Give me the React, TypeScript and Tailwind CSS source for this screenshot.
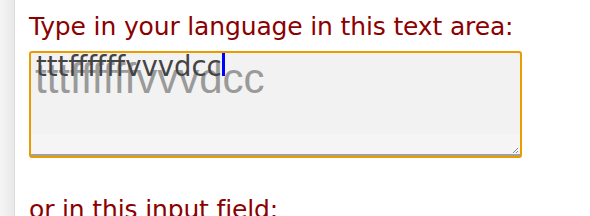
import React from "react";

export default function App() {
  return (
    <div className="flex h-[216px] w-[590px] overflow-hidden bg-white">
      <div className="w-[15px] shrink-0 border-r border-[#dcdcdc] bg-gradient-to-r from-[#f4f4f4] to-[#e9e9e9]" />
      <div className="flex flex-col pl-[14px] pt-[12px]">
        <div className="shrink-0 text-[25px] leading-[30px] text-[#8b0000] [font-family:'DejaVu_Sans',sans-serif] tracking-[-0.15px]">
          Type in your language in this text area:
        </div>
        <div className="relative mt-[9px] h-[107px] w-[493px] shrink-0 rounded-[3px] border-2 border-[#e89c00] bg-[#f2f2f2]">
          <div className="absolute inset-x-0 bottom-0 h-[22px] border-b-2 border-[#a0a0a0] bg-[#f5f5f5]" />
          <div className="absolute left-[4px] top-[5px] text-[42px] leading-[42px] text-[#9a9a9a] [font-family:'Liberation_Sans',sans-serif]">
            tttffffffvvvdcc
          </div>
          <div className="absolute left-[5px] top-0 flex items-start text-[27.5px] leading-[27px] text-[#444444] [font-family:'DejaVu_Sans',sans-serif]">
            <span>tttffffffvvvdcc</span>
            <span className="h-[23px] w-[3px] bg-[#0000ff]" />
          </div>
          <svg className="absolute bottom-[2px] right-[1px]" width="8" height="8" viewBox="0 0 8 8">
            <path d="M7 2 L2 7 M7 5 L5 7" stroke="#888" strokeWidth="1" />
          </svg>
        </div>
        <div className="mt-[37px] shrink-0 text-[25px] leading-[30px] text-[#8b0000] [font-family:'DejaVu_Sans',sans-serif] tracking-[-0.15px]">
          or in this input field:
        </div>
      </div>
    </div>
  );
}
